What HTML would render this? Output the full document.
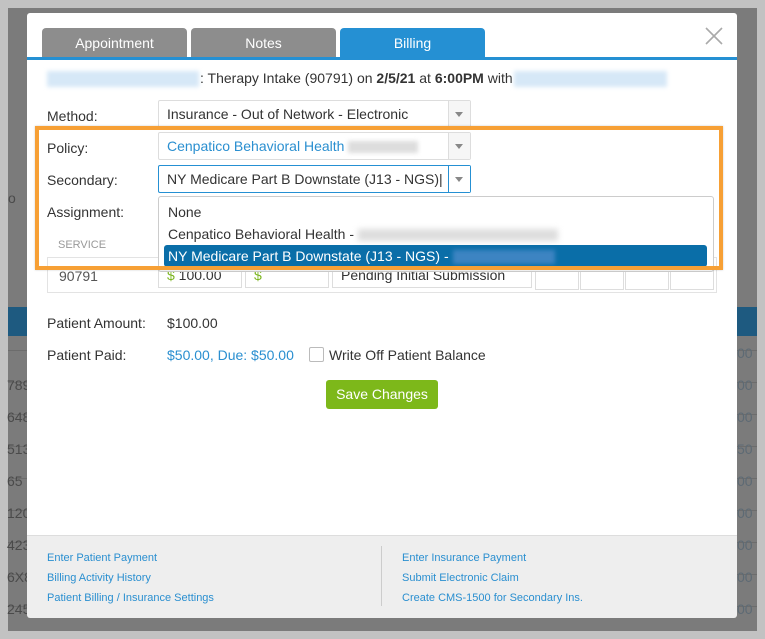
<!DOCTYPE html><html><head><style>
body{margin:0;width:765px;height:639px;background:#c2c2c2;font-family:"Liberation Sans",sans-serif;font-size:14px;color:#333;position:relative;overflow:hidden}
.bg{position:absolute;left:8px;top:8px;width:749px;height:623px;background:#7b7b7b}
.row{position:absolute;left:0;width:749px;height:1px;background:#6c6c6c}
.bl{position:absolute;top:299px;height:29px;background:#1e5a80;width:749px}
.side{position:absolute;color:#4a4a4a;font-size:14px}
.rs{position:absolute;left:729px;color:#5d6a74;font-size:14px}
.modal{position:absolute;left:27px;top:13px;width:710px;height:604px;background:#fff;border-radius:3px}
.tab{position:absolute;top:15px;height:29px;line-height:30px;text-align:center;color:#fff;font-size:14px;border-radius:4px 4px 0 0;background:#8d8d8d}
.tl{position:absolute;top:44px;left:0;width:710px;height:3px;background:#2590d3}
.blur{position:absolute;height:16px;background:#d6e8f7;filter:blur(2px)}
.lbl{position:absolute;left:20px;font-size:14px}
.sel{position:absolute;left:131px;width:313px;height:28px;border:1px solid #ddd;box-sizing:border-box;border-radius:2px;line-height:26px;padding-left:8px;font-size:14px}
.arr{position:absolute;right:0;top:0;width:21px;height:100%;border-left:1px solid #ddd;background:#f6f6f6}
.arr:after{content:"";position:absolute;left:6px;top:11px;border:4px solid transparent;border-top:5px solid #888}
.foot{position:absolute;left:0;top:522px;width:710px;height:82px;background:#eee;border-top:1px solid #ddd;border-radius:0 0 3px 3px}
.foot div{position:absolute;font-size:11px;color:#2a8fd0}
</style></head><body>
<div class="bg">
<div class="bl"></div>
<div class="row" style="top:342px"></div><div class="row" style="top:374px"></div><div class="row" style="top:406px"></div><div class="row" style="top:438px"></div><div class="row" style="top:470px"></div><div class="row" style="top:502px"></div><div class="row" style="top:534px"></div><div class="row" style="top:566px"></div><div class="row" style="top:598px"></div>
<div class="side" style="left:0;top:182px">o</div>
<div class="side" style="left:-1px;top:369px">789</div><div class="side" style="left:-1px;top:401px">648</div><div class="side" style="left:-1px;top:433px">513</div><div class="side" style="left:-1px;top:465px">65</div><div class="side" style="left:-1px;top:497px">120</div><div class="side" style="left:-1px;top:529px">423</div><div class="side" style="left:-1px;top:561px">6X8</div><div class="side" style="left:-1px;top:593px">245</div>
<div class="rs" style="top:337px">00</div><div class="rs" style="top:369px">00</div><div class="rs" style="top:401px">00</div><div class="rs" style="top:433px">50</div><div class="rs" style="top:465px">00</div><div class="rs" style="top:497px">00</div><div class="rs" style="top:529px">00</div><div class="rs" style="top:561px">00</div><div class="rs" style="top:593px">00</div>
</div>
<div class="modal">
<div class="tab" style="left:15px;width:145px">Appointment</div>
<div class="tab" style="left:164px;width:145px">Notes</div>
<div class="tab" style="left:313px;width:145px;background:#2590d3">Billing</div>
<svg style="position:absolute;left:678px;top:14px" width="18" height="18"><path d="M1 1L17 17M17 1L1 17" stroke="#aaa" stroke-width="1.6"/></svg>
<div class="tl"></div>
<div class="blur" style="left:20px;top:58px;width:152px"></div>
<div style="position:absolute;left:173px;top:57px">: Therapy Intake (90791) on <b>2/5/21</b> at <b>6:00PM</b> with</div>
<div class="blur" style="left:487px;top:58px;width:153px"></div>
<div class="lbl" style="top:95px">Method:</div>
<div class="sel" style="top:87px">Insurance - Out of Network - Electronic<span class="arr"></span></div>
<div class="lbl" style="top:127px">Policy:</div>
<div class="sel" style="top:119px;color:#2a8fd0">Cenpatico Behavioral Health <span style="display:inline-block;width:70px;height:12px;background:#ddd;filter:blur(2px);vertical-align:middle"></span><span class="arr"></span></div>
<div class="lbl" style="top:159px">Secondary:</div>
<div class="sel" style="top:152px;border-color:#2590d3">NY Medicare Part B Downstate (J13 - NGS)|<span class="arr" style="border-color:#2590d3;background:#fff"></span></div>
<div class="lbl" style="top:191px">Assignment:</div>
<div style="position:absolute;left:31px;top:226px;font-size:11px;color:#999">SERVICE</div>
<div style="position:absolute;left:20px;top:244px;width:668px;height:34px;border:1px solid #e3e3e3"></div>
<div style="position:absolute;left:32px;top:255px;color:#555">90791</div>
<div style="position:absolute;left:131px;top:247px;width:84px;height:28px;border:1px solid #ddd;line-height:28px;padding-left:8px;box-sizing:border-box"><span style="color:#7ab41d">$</span> 100.00</div>
<div style="position:absolute;left:218px;top:247px;width:84px;height:28px;border:1px solid #ddd;line-height:28px;padding-left:8px;box-sizing:border-box;color:#7ab41d">$</div>
<div style="position:absolute;left:305px;top:247px;width:200px;height:28px;border:1px solid #ddd;line-height:28px;padding-left:8px;box-sizing:border-box">Pending Initial Submission</div>
<div style="position:absolute;left:508px;top:247px;width:42px;height:28px;border:1px solid #ddd"></div>
<div style="position:absolute;left:553px;top:247px;width:42px;height:28px;border:1px solid #ddd"></div>
<div style="position:absolute;left:598px;top:247px;width:42px;height:28px;border:1px solid #ddd"></div>
<div style="position:absolute;left:643px;top:247px;width:42px;height:28px;border:1px solid #ddd"></div>
<div style="position:absolute;left:131px;top:183px;width:554px;height:74px;background:#fff;border:1px solid #ccc;border-radius:3px"></div>
<div style="position:absolute;left:141px;top:191px">None</div>
<div style="position:absolute;left:141px;top:213px">Cenpatico Behavioral Health - <span style="display:inline-block;width:200px;height:12px;background:#ddd;filter:blur(3px);vertical-align:middle"></span></div>
<div style="position:absolute;left:137px;top:232px;width:543px;height:22px;background:#0a6ea8;border-radius:3px;color:#fff;line-height:22px;padding-left:4px;box-sizing:border-box">NY Medicare Part B Downstate (J13 - NGS) - <span style="display:inline-block;width:102px;height:14px;background:#3d84c2;filter:blur(2px);vertical-align:middle"></span></div>
<div style="position:absolute;left:8px;top:113px;width:680px;height:136px;border:4px solid #f7a035;box-shadow:0 0 2px rgba(0,0,0,.2)"></div>
<div class="lbl" style="top:302px">Patient Amount:</div>
<div style="position:absolute;left:140px;top:302px">$100.00</div>
<div class="lbl" style="top:334px">Patient Paid:</div>
<div style="position:absolute;left:140px;top:334px;color:#2a8fd0">$50.00, Due: $50.00</div>
<div style="position:absolute;left:282px;top:334px;width:13px;height:13px;border:1px solid #bbb;border-radius:2px"></div>
<div style="position:absolute;left:302px;top:334px">Write Off Patient Balance</div>
<div style="position:absolute;left:299px;top:367px;width:112px;height:29px;background:#7db81a;border-radius:3px;color:#fff;text-align:center;line-height:29px;font-size:14px">Save Changes</div>
<div class="foot">
<div style="left:20px;top:16px">Enter Patient Payment</div>
<div style="left:20px;top:36px">Billing Activity History</div>
<div style="left:20px;top:56px">Patient Billing / Insurance Settings</div>
<div style="left:354px;top:10px;width:1px;height:60px;background:#ccc"></div>
<div style="left:375px;top:16px">Enter Insurance Payment</div>
<div style="left:375px;top:36px">Submit Electronic Claim</div>
<div style="left:375px;top:56px">Create CMS-1500 for Secondary Ins.</div>
</div>
</div>
</body></html>
